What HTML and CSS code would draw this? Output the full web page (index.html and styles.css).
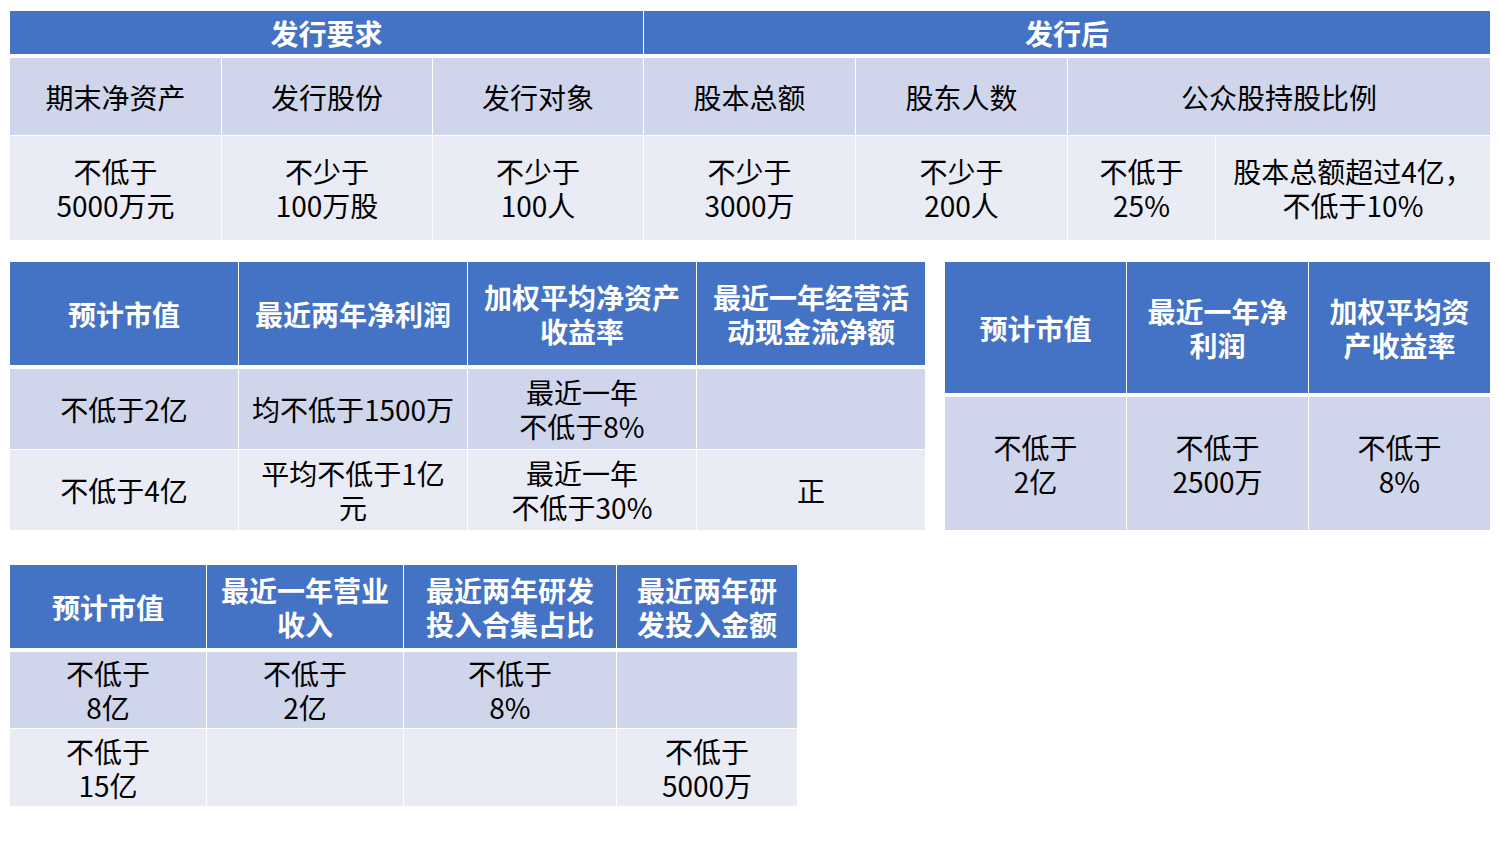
FILE: index.html
```html
<!DOCTYPE html>
<html lang="zh-CN">
<head>
<meta charset="utf-8">
<title>发行条件</title>
<link rel="stylesheet" href="styles.css">
</head>
<body>
<div class="page">
  <div class="tbl t1">
    <div class="cell hd span3">发行要求</div>
    <div class="cell hd span4">发行后</div>

    <div class="cell r1">期末净资产</div>
    <div class="cell r1">发行股份</div>
    <div class="cell r1">发行对象</div>
    <div class="cell r1">股本总额</div>
    <div class="cell r1">股东人数</div>
    <div class="cell r1 span2">公众股持股比例</div>

    <div class="cell r2"><span class="ln">不低于</span><span class="ln">5000万元</span></div>
    <div class="cell r2"><span class="ln">不少于</span><span class="ln">100万股</span></div>
    <div class="cell r2"><span class="ln">不少于</span><span class="ln">100人</span></div>
    <div class="cell r2"><span class="ln">不少于</span><span class="ln">3000万</span></div>
    <div class="cell r2"><span class="ln">不少于</span><span class="ln">200人</span></div>
    <div class="cell r2"><span class="ln">不低于</span><span class="ln">25%</span></div>
    <div class="cell r2"><span class="ln">股本总额超过4亿，</span><span class="ln">不低于10%</span></div>
  </div>

  <div class="pair">
    <div class="tbl t2">
      <div class="cell hd">预计市值</div>
      <div class="cell hd">最近两年净利润</div>
      <div class="cell hd"><span class="ln">加权平均净资产</span><span class="ln">收益率</span></div>
      <div class="cell hd"><span class="ln">最近一年经营活</span><span class="ln">动现金流净额</span></div>

      <div class="cell r1">不低于2亿</div>
      <div class="cell r1">均不低于1500万</div>
      <div class="cell r1"><span class="ln">最近一年</span><span class="ln">不低于8%</span></div>
      <div class="cell r1"></div>

      <div class="cell r2">不低于4亿</div>
      <div class="cell r2"><span class="ln">平均不低于1亿</span><span class="ln">元</span></div>
      <div class="cell r2"><span class="ln">最近一年</span><span class="ln">不低于30%</span></div>
      <div class="cell r2">正</div>
    </div>

    <div class="tbl t3">
      <div class="cell hd">预计市值</div>
      <div class="cell hd"><span class="ln">最近一年净</span><span class="ln">利润</span></div>
      <div class="cell hd"><span class="ln">加权平均资</span><span class="ln">产收益率</span></div>

      <div class="cell r1"><span class="ln">不低于</span><span class="ln">2亿</span></div>
      <div class="cell r1"><span class="ln">不低于</span><span class="ln">2500万</span></div>
      <div class="cell r1"><span class="ln">不低于</span><span class="ln">8%</span></div>
    </div>
  </div>

  <div class="tbl t4">
    <div class="cell hd">预计市值</div>
    <div class="cell hd"><span class="ln">最近一年营业</span><span class="ln">收入</span></div>
    <div class="cell hd"><span class="ln">最近两年研发</span><span class="ln">投入合集占比</span></div>
    <div class="cell hd"><span class="ln">最近两年研</span><span class="ln">发投入金额</span></div>

    <div class="cell r1"><span class="ln">不低于</span><span class="ln">8亿</span></div>
    <div class="cell r1"><span class="ln">不低于</span><span class="ln">2亿</span></div>
    <div class="cell r1"><span class="ln">不低于</span><span class="ln">8%</span></div>
    <div class="cell r1"></div>

    <div class="cell r2"><span class="ln">不低于</span><span class="ln">15亿</span></div>
    <div class="cell r2"></div>
    <div class="cell r2"></div>
    <div class="cell r2"><span class="ln">不低于</span><span class="ln">5000万</span></div>
  </div>
</div>
</body>
</html>
```

FILE: styles.css
```css
html, body {
  margin: 0;
  padding: 0;
  background: #ffffff;
}

.page {
  padding: 11px 10px;
  font-family: "Noto Sans CJK SC", "Noto Sans", sans-serif;
  color: #000000;
}

.tbl {
  display: grid;
  gap: 1px;
  background: #ffffff;
}

.cell {
  display: flex;
  flex-direction: column;
  align-items: center;
  justify-content: center;
  text-align: center;
  font-size: 28px;
  line-height: 34px;
}

.ln {
  display: block;
  height: 34px;
  line-height: 34px;
  white-space: nowrap;
}

.hd {
  background: #4472c4;
  color: #ffffff;
  font-weight: 700;
  margin-bottom: 3px;
}

.r1 {
  background: #cfd5ea;
}

.r2 {
  background: #e9ebf5;
}

.span2 { grid-column: span 2; }
.span3 { grid-column: span 3; }
.span4 { grid-column: span 4; }

.t1 {
  width: 1480px;
  grid-template-columns: 211px 210px 210px 211px 211px 147px 274px;
  grid-template-rows: 46px 77px 104px;
}

.pair {
  display: flex;
  gap: 20px;
  margin-top: 22px;
  align-items: flex-start;
}

.t2 {
  grid-template-columns: repeat(4, 228px);
  grid-template-rows: 106px 80px 80px;
}

.t3 {
  grid-template-columns: repeat(3, 181px);
  grid-template-rows: 134px 133px;
}

.t4 {
  margin-top: 35px;
  width: 787px;
  grid-template-columns: 196px 196px 212px 180px;
  grid-template-rows: 86px 76px 77px;
}
```
